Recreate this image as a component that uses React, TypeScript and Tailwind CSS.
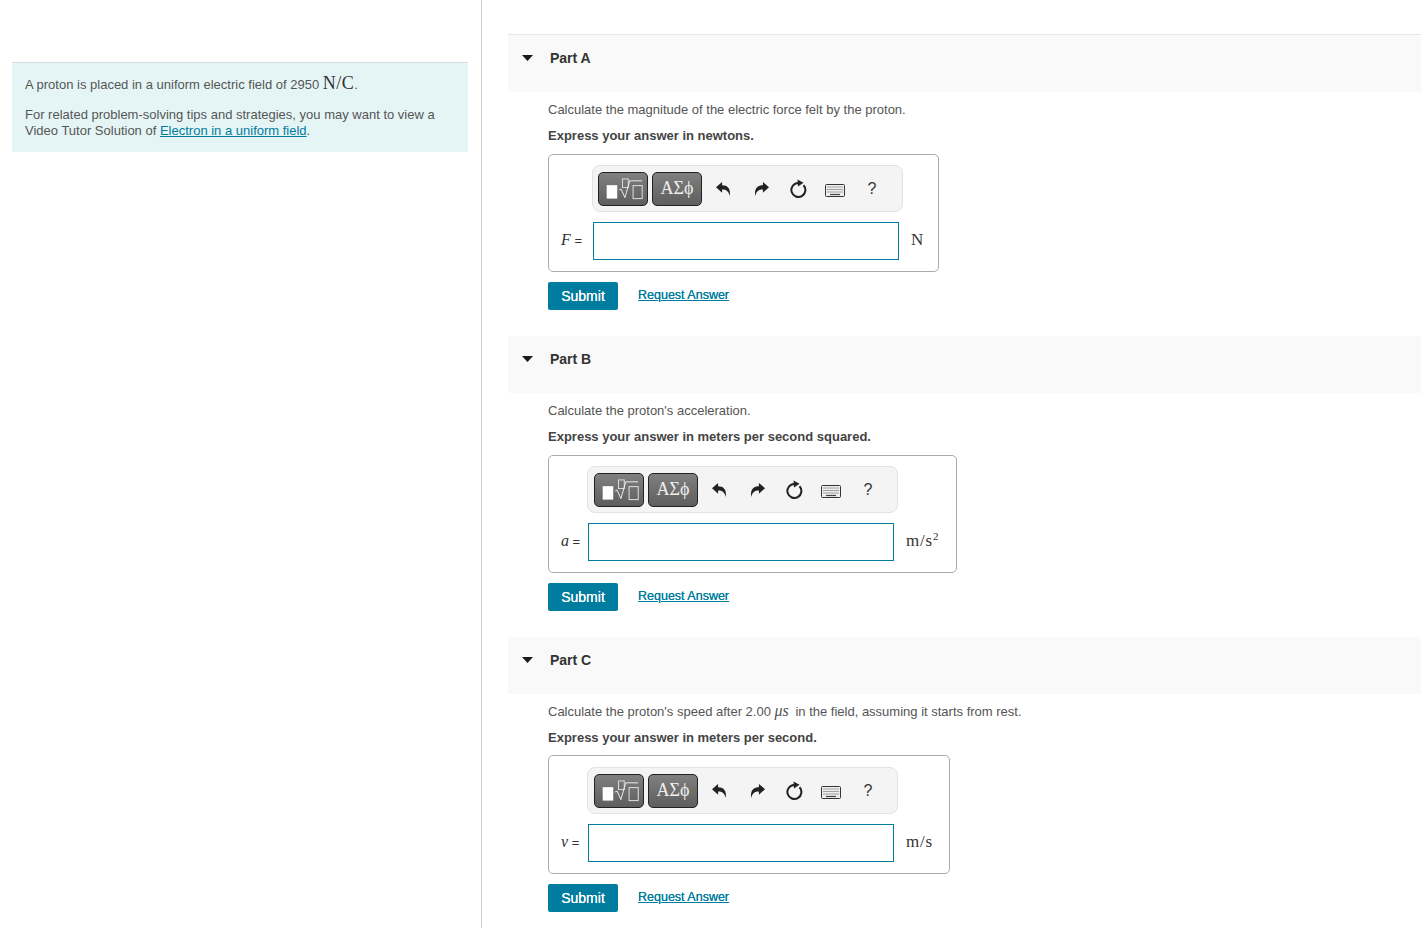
const serif = "font-['Liberation_Serif',serif]"

function MathIcon() {
  return (
    <svg width="50" height="34" viewBox="0 0 50 34" fill="none">
      <rect x="8" y="13" width="11" height="14" fill="#fff" />
      <rect x="24.5" y="6.5" width="6" height="9" stroke="#ddd" strokeWidth="1" />
      <path d="M21 18 L23 17 L27 26 L32 8.5 H45" stroke="#eee" strokeWidth="1" />
      <rect x="35.5" y="13.5" width="9.5" height="13.5" stroke="#e4e4e4" strokeWidth="1" />
    </svg>
  )
}

function UndoIcon({ flip }: { flip?: boolean }) {
  return (
    <svg className={flip ? '-scale-x-100' : ''} width="15" height="16" viewBox="0 0 16 16">
      <path d="M0 6 L6.5 0.5 V4 C12 4 15.8 7 14.8 15.5 C13.5 10.5 11 8.5 6.5 8.5 V12 Z" fill="#222" />
    </svg>
  )
}

function RefreshIcon() {
  return (
    <svg width="18" height="20" viewBox="0 0 18 20" fill="none">
      <path d="M13.5 6.2 A7 7 0 1 1 8 4" stroke="#222" strokeWidth="2" />
      <path d="M7.5 0.5 L13.5 3.7 L8 7.5 Z" fill="#222" />
    </svg>
  )
}

function KeyboardIcon() {
  return (
    <svg width="20" height="13" viewBox="0 0 20 13" fill="none">
      <rect x="0.5" y="0.5" width="19" height="12" rx="1" fill="#eee" stroke="#333" />
      <path d="M2.5 3 H17.5 M2.5 5.5 H17.5 M2.5 8 H17.5" stroke="#555" strokeWidth="1.2" strokeDasharray="1 1" />
      <path d="M5 10.5 H15" stroke="#444" strokeWidth="1.2" />
    </svg>
  )
}

function Toolbar({ wide }: { wide?: boolean }) {
  const btn =
    'flex h-[34px] items-center justify-center rounded-[5px] border border-[#222] bg-gradient-to-b from-[#808080] to-[#5e5e5e]'
  return (
    <div
      className={`flex h-[47px] w-[311px] items-center rounded-[8px] border border-[#e2e2e2] bg-[#f4f4f4] ${
        wide ? 'pl-[6px]' : 'pl-[5px]'
      }`}
    >
      <div className={`${btn} w-[50px]`}>
        <MathIcon />
      </div>
      <div className={`${btn} ml-[4px] w-[50px] ${serif} text-[18px] text-[#eee]`}>ΑΣϕ</div>
      <div className="ml-[13px] flex w-[16px] justify-center">
        <UndoIcon />
      </div>
      <div className="ml-[22px] flex w-[16px] justify-center">
        <UndoIcon flip />
      </div>
      <div className="ml-[21px] flex w-[18px] justify-center">
        <RefreshIcon />
      </div>
      <div className="ml-[17px] flex w-[20px] justify-center pt-[3px]">
        <KeyboardIcon />
      </div>
      <div className="ml-[22px] w-[10px] text-center text-[16px] text-[#333]">?</div>
    </div>
  )
}

interface PartProps {
  name: string
  question: React.ReactNode
  express: string
  symbol: string
  unit: React.ReactNode
  boxClass: string
  labelClass: string
  toolbarClass: string
  wide?: boolean
}

function Part({ name, question, express, symbol, unit, boxClass, labelClass, toolbarClass, wide }: PartProps) {
  return (
    <section className="h-[301px]">
      <div className="flex h-[57px] items-start bg-[#f9f9f9] pt-[14px]">
        <svg className="ml-[14px] mt-[6px]" width="11" height="6" viewBox="0 0 11 6">
          <path d="M0 0 H11 L5.5 6 Z" fill="#1a1a1a" />
        </svg>
        <h2 className="ml-[17px] text-[14px] leading-[18px] font-bold text-[#333]">{name}</h2>
      </div>
      <div className="pl-[40px]">
        <p className="mt-[9px] h-[18px] text-[13px] leading-[18px] text-[#555]">{question}</p>
        <p className="mt-[8px] h-[18px] text-[13px] leading-[18px] font-bold text-[#444]">{express}</p>
        <div className={`rounded-[5px] border border-[#aaa] ${boxClass}`}>
          <div className={toolbarClass}>
            <Toolbar wide={wide} />
          </div>
          <div className="mt-[10px] flex items-center">
            <div className={`${labelClass} -mt-[2px] pl-[12px] text-[13px] text-[#333]`}>
              <span className={`${serif} text-[16px] italic`}>{symbol}</span> =
            </div>
            <div className="h-[38px] w-[306px] border border-[#007c9e] bg-white" />
            <div className={`ml-[12px] -mt-[3px] ${serif} text-[17px] tracking-[0.8px] text-[#333]`}>{unit}</div>
          </div>
        </div>
        <div className="mt-[10px] flex items-start">
          <button className="h-[28px] w-[70px] rounded-[2px] bg-[#007c9e] text-[14px] text-white [text-shadow:0_0_0.5px_#fff]">
            Submit
          </button>
          <a
            href="#"
            className="ml-[20px] mt-[5px] text-[12.5px] leading-[16px] text-[#007c9e] underline [text-shadow:0_0_0.5px_#007c9e]"
          >
            Request Answer
          </a>
        </div>
      </div>
    </section>
  )
}

export default function App() {
  return (
    <div className="flex h-[928px] overflow-hidden bg-white font-['Liberation_Sans',sans-serif]">
      <aside className="w-[482px] shrink-0 border-r border-[#c5d0da] px-[12px] pt-[62px]">
        <div className="h-[90px] w-[456px] border-t border-[#d5dfe2] bg-[#e5f5f6] pl-[13px] pr-[12px] pt-[10px] text-[13px] text-[#555]">
          <p className="h-[20px] leading-[20px]">
            A proton is placed in a uniform electric field of 2950{' '}
            <span className={`${serif} text-[18px] tracking-[0.5px] text-[#333]`}>N/C</span>.
          </p>
          <p className="mt-[14px] leading-[16px]">
            For related problem-solving tips and strategies, you may want to view a Video Tutor Solution of{' '}
            <a href="#" className="text-[#007c9e] underline">
              Electron in a uniform field
            </a>
            .
          </p>
        </div>
      </aside>
      <main className="min-w-0 flex-1 pl-[26px] pt-[34px]">
        <div className="h-px bg-[#e6e6e6]" />
        <Part
          name="Part A"
          question="Calculate the magnitude of the electric force felt by the proton."
          express="Express your answer in newtons."
          symbol="F"
          unit="N"
          boxClass="mt-[9px] h-[118px] w-[391px] pt-[10px]"
          labelClass="w-[44px]"
          toolbarClass="ml-[43px]"
        />
        <Part
          name="Part B"
          question="Calculate the proton's acceleration."
          express="Express your answer in meters per second squared."
          symbol="a"
          unit={
            <>
              m/s<sup className="text-[11px]">2</sup>
            </>
          }
          boxClass="mt-[9px] h-[118px] w-[409px] pt-[10px]"
          labelClass="w-[39px]"
          toolbarClass="ml-[38px]"
          wide
        />
        <Part
          name="Part C"
          question={
            <>
              Calculate the proton's speed after 2.00{' '}
              <span className={`${serif} mr-[3px] text-[16px] leading-[0] italic`}>μs</span> in the field, assuming it
              starts from rest.
            </>
          }
          express="Express your answer in meters per second."
          symbol="v"
          unit="m/s"
          boxClass="mt-[8px] h-[119px] w-[402px] pt-[11px]"
          labelClass="w-[39px]"
          toolbarClass="ml-[38px]"
          wide
        />
      </main>
    </div>
  )
}
